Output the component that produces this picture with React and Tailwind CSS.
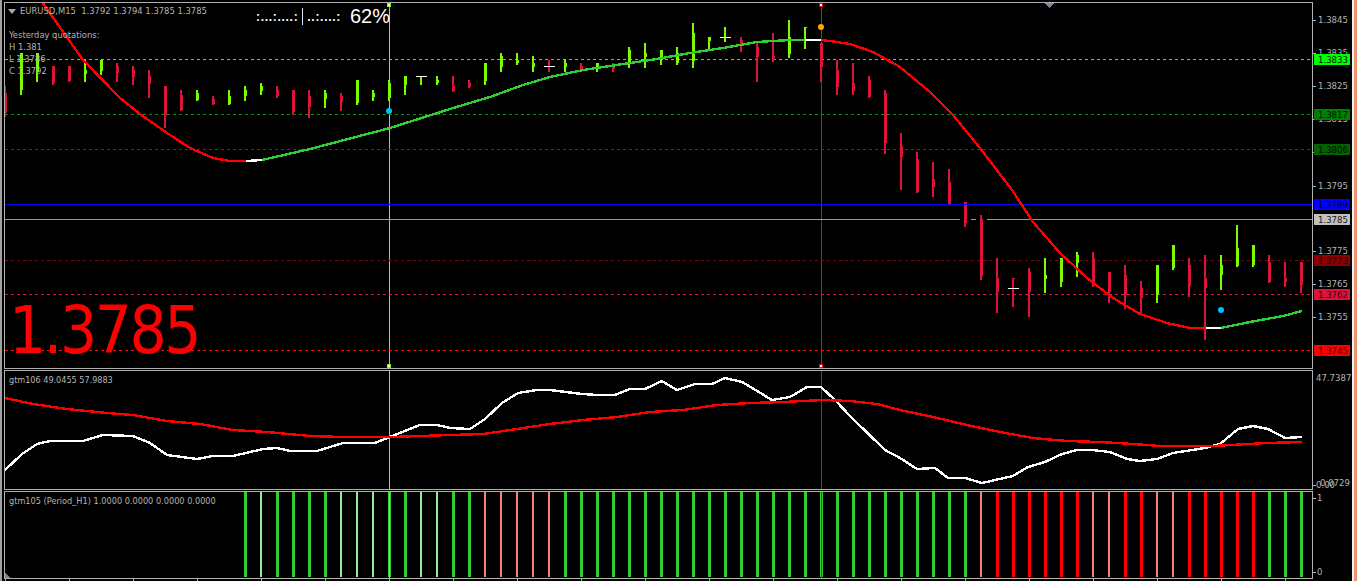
import React from 'react';

const RED = '#dc143c';
const LIME = '#7cfc00';

// [kind, high, low, tickTop, tickBottom, crossY]  x = 4 + 16 * index
const bars = [
  ['r', 86, 117, 93, 113], ['g', 53, 95, 53, 90], ['g', 53, 82, 53, 72], ['r', 66, 85, 66, 83],
  ['r', 66, 82, 66, 81], ['g', 60, 82, 70, 74], ['g', 60, 75, 60, 71], ['r', 63, 82, 66, 73],
  ['r', 66, 85, 70, 77], ['r', 70, 98, 76, 84], ['r', 86, 128, 86, 115], ['r', 90, 111, 95, 110],
  ['g', 90, 101, 93, 100], ['r', 96, 105, 99, 104], ['g', 90, 105, 96, 104], ['g', 86, 101, 90, 96],
  ['g', 83, 95, 86, 91], ['r', 86, 98, 90, 96], ['r', 90, 115, 90, 112], ['r', 90, 118, 96, 107],
  ['g', 90, 108, 93, 99], ['r', 93, 111, 96, 102], ['g', 80, 105, 80, 103], ['g', 90, 101, 93, 97],
  ['g', 80, 101, 83, 98], ['g', 76, 95, 76, 85], ['g', 76, 85, 76, 77, 76], ['g', 76, 85, 80, 83],
  ['r', 76, 92, 86, 91], ['r', 80, 88, 83, 87], ['g', 63, 85, 63, 81], ['g', 53, 72, 56, 67],
  ['g', 53, 65, 60, 63], ['g', 56, 72, 63, 67], ['r', 60, 72, 66, 67, 66], ['g', 60, 72, 63, 67],
  ['r', 63, 70, 66, 69], ['g', 63, 72, 63, 69], ['r', 63, 72, 66, 69], ['g', 47, 68, 50, 63],
  ['g', 43, 68, 53, 57], ['g', 50, 65, 50, 60], ['g', 47, 65, 53, 63], ['g', 23, 68, 33, 61],
  ['g', 37, 50, 37, 41], ['g', 27, 42, 37, 38, 37], ['r', 37, 52, 40, 43], ['r', 43, 82, 47, 57],
  ['r', 33, 62, 56, 60], ['g', 20, 58, 37, 54], ['g', 27, 49, 27, 28], ['r', 43, 82, 43, 67],
  ['r', 60, 95, 70, 87], ['r', 63, 95, 83, 91], ['r', 76, 98, 80, 97], ['r', 90, 154, 93, 143],
  ['r', 133, 190, 146, 157], ['r', 152, 193, 159, 192], ['r', 162, 197, 179, 187], ['r', 169, 204, 182, 204],
  ['r', 202, 227, 202, 223], ['r', 215, 280, 219, 276], ['r', 258, 313, 278, 292], ['r', 278, 307, 278, 279, 288],
  ['r', 268, 317, 272, 292], ['g', 258, 293, 275, 279], ['g', 258, 287, 258, 282], ['g', 252, 277, 255, 263],
  ['r', 252, 287, 258, 286], ['r', 272, 303, 272, 292], ['r', 265, 309, 275, 295], ['r', 281, 315, 288, 298],
  ['g', 265, 303, 265, 295], ['g', 245, 270, 245, 268], ['r', 258, 297, 265, 286], ['r', 255, 340, 278, 288],
  ['g', 255, 290, 265, 275], ['g', 225, 267, 248, 266], ['g', 245, 267, 245, 265], ['r', 255, 283, 262, 282],
  ['r', 262, 287, 278, 282], ['r', 262, 293, 262, 285],
];

const pts = (a) => a.map((p) => p.join(',')).join(' ');

const maRed1 = [[42, 2], [83, 60], [120, 98], [140, 114], [167, 133], [190, 148], [213, 158], [230, 161], [246, 161]];
const maGreen1 = [[262, 160], [310, 149], [390, 128], [450, 109], [490, 97], [523, 85], [550, 77], [583, 70], [630, 63], [657, 59], [690, 53], [723, 48], [757, 42], [790, 40], [805, 40]];
const maRed2 = [[821, 40], [830, 41], [850, 44], [873, 52], [900, 67], [930, 92], [953, 115], [980, 148], [1012, 190], [1033, 222], [1060, 253], [1087, 278], [1113, 298], [1140, 314], [1167, 323], [1190, 328], [1206, 328]];
const maGreen2 = [[1221, 328], [1250, 322], [1283, 316], [1302, 311]];

const oscWhite = [[5, 470], [22, 454], [37, 444], [50, 441], [83, 441], [103, 435], [133, 436], [150, 443], [167, 455], [197, 459], [213, 456], [233, 456], [263, 449], [277, 448], [290, 451], [317, 451], [343, 443], [375, 443], [390, 437], [420, 425], [437, 425], [450, 428], [470, 429], [485, 419], [502, 403], [518, 393], [537, 390], [550, 390], [582, 394], [597, 395], [615, 395], [630, 389], [645, 389], [662, 381], [677, 390], [695, 384], [712, 384], [725, 378], [742, 382], [772, 400], [790, 397], [807, 387], [821, 387], [835, 400], [852, 418], [885, 450], [900, 458], [917, 469], [935, 468], [948, 478], [965, 478], [982, 483], [1013, 476], [1028, 467], [1045, 462], [1062, 454], [1077, 450], [1092, 450], [1110, 452], [1127, 459], [1140, 461], [1157, 459], [1173, 453], [1205, 448], [1220, 444], [1238, 429], [1253, 426], [1268, 429], [1285, 438], [1302, 437]];
const oscRed = [[5, 398], [33, 404], [67, 409], [107, 413], [133, 415], [167, 421], [200, 424], [233, 430], [267, 432], [310, 436], [343, 437], [390, 437], [450, 435], [483, 434], [517, 429], [550, 424], [583, 420], [617, 417], [650, 412], [683, 410], [717, 405], [750, 403], [783, 402], [823, 400], [850, 401], [877, 404], [900, 410], [933, 417], [967, 425], [1000, 432], [1033, 438], [1067, 441], [1100, 442], [1133, 444], [1160, 446], [1213, 446], [1267, 443], [1302, 442]];

// g thick green, l light green, s salmon, r red; first bar sits at x = 244
const histo = 'gl'.concat('gggg', 'lll', 'gg', 'll', 'gg', 'sssss', 'g'.repeat(26), 's', 'rrrrrr', 'ss', 'rr', 'ss', 'rrrrr', 'ggg');
const histoStyle = {
  g: ['#32cd32', 3], l: ['#90ee90', 2], s: ['#fa8072', 2], r: ['#ff0000', 3],
};

const levels = [
  { y: 59, line: '#33ee33', tag: '#00ff00', text: '#002000', label: '1.3833' },
  { y: 114, line: '#009000', tag: '#008000', text: '#00100a', label: '1.3817' },
  { y: 149, line: '#006400', tag: '#006400', text: '#000a05', label: '1.3806' },
  { y: 260, line: '#8b0000', tag: '#8b0000', text: '#2a0000', label: '1.3773' },
  { y: 294, line: RED, tag: RED, text: '#30000c', label: '1.3762' },
  { y: 350, line: '#ff0000', tag: '#ff0000', text: '#400000', label: '1.3745' },
];

const priceScale = [
  [20, '1.3845'], [53, '1.3835'], [86, '1.3825'], [119, '1.3815'], [152, '1.3805'],
  [186, '1.3795'], [251, '1.3775'], [284, '1.3765'], [317, '1.3755'],
];

function Marker({ x, y, color }) {
  return <rect x={x + 0.5} y={y + 0.5} width="3" height="3" fill="#fff" stroke={color} strokeWidth="1" />;
}

function MainChart() {
  return (
    <svg viewBox="5 3 1307 365" className="block w-[1307px] h-[365px]" shapeRendering="crispEdges">
      <line x1="389.5" x2="389.5" y1="3" y2="368" stroke={LIME} />
      <line x1="821.5" x2="821.5" y1="3" y2="368" stroke="#ff0000" />
      {levels.map((l) => (
        <line key={l.y} x1="5" x2="1312" y1={l.y + 0.5} y2={l.y + 0.5} stroke={l.line} strokeDasharray="3 3" />
      ))}
      <line x1="5" x2="960" y1="219.5" y2="219.5" stroke="#9a9a9a" />
      <line x1="971" x2="976" y1="219.5" y2="219.5" stroke="#9a9a9a" />
      <line x1="987" x2="1312" y1="219.5" y2="219.5" stroke="#9a9a9a" />
      {bars.map(([kind, hi, lo, top, bottom, cross], i) => {
        const x = 4 + 16 * i;
        const fill = kind === 'g' ? LIME : RED;
        return (
          <g key={i}>
            <rect x={x} y={hi} width="2" height={lo - hi} fill={fill} />
            <rect x={x + 2} y={top} width="1" height={bottom - top} fill={fill} />
            {cross !== undefined && <rect x={x - 4} y={cross} width="11" height="1" fill="#fff" />}
          </g>
        );
      })}
      <line x1="5" x2="1312" y1="204.5" y2="204.5" stroke="#0000ff" strokeWidth="1" />
      <polyline points={pts(maRed1)} fill="none" stroke="#ff0000" strokeWidth="2.4" />
      <polyline points="246,161 262,160" fill="none" stroke="#fff" strokeWidth="2.4" />
      <polyline points={pts(maGreen1)} fill="none" stroke="#32cd32" strokeWidth="2.4" />
      <polyline points="805,40 821,40" fill="none" stroke="#fff" strokeWidth="2.4" />
      <polyline points={pts(maRed2)} fill="none" stroke="#ff0000" strokeWidth="2.4" />
      <polyline points="1206,328 1221,328" fill="none" stroke="#fff" strokeWidth="2.4" />
      <polyline points={pts(maGreen2)} fill="none" stroke="#32cd32" strokeWidth="2.4" />
      <g shapeRendering="auto">
        <circle cx="389" cy="111" r="3" fill="#00bfff" />
        <circle cx="1221" cy="310" r="3" fill="#00bfff" />
        <circle cx="821" cy="27" r="3" fill="#ffa500" />
      </g>
      <polygon points="1045,3 1054,3 1049.5,8" fill="#778899" />
      <Marker x={387} y={3} color={LIME} />
      <Marker x={819} y={3} color="#ff0000" />
      <Marker x={387} y={364} color={LIME} />
      <Marker x={819} y={364} color="#ff0000" />
    </svg>
  );
}

function OscChart() {
  return (
    <svg viewBox="5 371 1307 118" className="block w-[1307px] h-[118px]" shapeRendering="crispEdges">
      <line x1="389.5" x2="389.5" y1="371" y2="489" stroke={LIME} />
      <line x1="821.5" x2="821.5" y1="371" y2="489" stroke="#ff0000" />
      <polyline points={pts(oscWhite)} fill="none" stroke="#fff" strokeWidth="2.4" />
      <polyline points={pts(oscRed)} fill="none" stroke="#ff0000" strokeWidth="2.4" />
    </svg>
  );
}

function HistoChart() {
  return (
    <svg viewBox="5 492 1307 86" className="block w-[1307px] h-[86px]" shapeRendering="crispEdges">
      {histo.split('').map((k, i) => {
        const [fill, w] = histoStyle[k];
        return <rect key={i} x={244 + 16 * i} y="492" width={w} height="85" fill={fill} />;
      })}
      <line x1="389.5" x2="389.5" y1="492" y2="578" stroke={LIME} />
      <line x1="821.5" x2="821.5" y1="492" y2="578" stroke="#ff0000" />
      <polygon points="5,573 5,578 10,578" fill="#778899" />
    </svg>
  );
}

function AxisLabel({ y, x = 3, tick = true, children }) {
  return (
    <div className="absolute left-0 h-3 flex items-center" style={{ top: y - 6 }}>
      {tick && <span className="w-[3px] h-px bg-[#b0b0b0]" />}
      <span className="absolute leading-3 text-[#b4b4b4] whitespace-nowrap" style={{ left: x }}>{children}</span>
    </div>
  );
}

export default function App() {
  return (
    <div
      className="w-[1357px] h-[581px] flex bg-black overflow-hidden text-[9.5px] text-[#b4b4b4]"
      style={{ fontFamily: '"DejaVu Sans Condensed", "DejaVu Sans", sans-serif', fontStretch: 'condensed' }}
    >
      <div className="w-[2px] bg-[#a0a0a0]" />
      <div className="w-[2px]" />

      <div className="w-[1348px] flex flex-col pt-[2px]">
        {/* price pane */}
        <div className="flex h-[367px]">
          <div className="relative w-[1309px] border border-[#b0b0b0]">
            <MainChart />
            <div className="absolute left-[3px] top-[6px] w-[8px] h-[5px] flex justify-center">
              <span className="w-0 h-0 border-x-[4px] border-x-transparent border-t-[5px] border-t-[#a8a8a8]" />
            </div>
            <div className="absolute left-[15px] top-[2px] text-[9.35px] leading-3 whitespace-pre">
              EURUSD,M15  1.3792 1.3794 1.3785 1.3785
            </div>
            <div className="absolute left-[4px] top-[26px] flex flex-col text-[9.3px] leading-3">
              <span>Yesterday quotations:</span>
              <span>H 1.381</span>
              <span>L 1.3786</span>
              <span>C 1.3792</span>
            </div>
            <div className="absolute left-[251px] top-[4px] flex items-end h-[18px] text-white font-['Liberation_Sans',sans-serif] text-[12px] leading-none font-bold">
              <span className="tracking-[0.7px] pb-[2px]">:...:....:</span>
              <span className="w-[1px] h-[17px] mx-[4px] bg-[#cfe8ff]" />
              <span className="tracking-[0.7px] pb-[2px]">..:....:</span>
            </div>
            <div className="absolute left-[345px] top-[1px] text-white font-['Liberation_Sans',sans-serif] text-[20px] leading-[24px]">
              62%
            </div>
            <div className="absolute left-[4px] top-[290px] text-[#ff0000] text-[65px] leading-[76px] tracking-[-2.4px]">
              1.3785
            </div>
          </div>
          <div className="relative flex-1">
            {priceScale.map(([y, label]) => (
              <AxisLabel key={label} y={y - 2} x={5}>{label}</AxisLabel>
            ))}
            {levels.map((l) => (
              <div
                key={l.label}
                className="absolute left-[1px] w-[36px] h-[11px] pl-[4px] leading-[11px]"
                style={{ top: l.y - 7, backgroundColor: l.tag, color: l.text }}
              >
                {l.label}
              </div>
            ))}
            <div className="absolute left-[1px] top-[197px] w-[36px] h-[11px] pl-[4px] leading-[11px] bg-[#0000ff] text-[#000030]">1.3789</div>
            <div className="absolute left-[1px] top-[212px] w-[36px] h-[11px] pl-[4px] leading-[11px] bg-[#c0c0c0] text-[#181818]">1.3785</div>
          </div>
        </div>

        <div className="h-px" />

        {/* oscillator pane */}
        <div className="flex h-[120px]">
          <div className="relative w-[1309px] border border-[#b0b0b0]">
            <OscChart />
            <div className="absolute left-[4px] top-[3px] text-[9px] leading-3">gtm106 49.0455 57.9883</div>
          </div>
          <div className="relative flex-1">
            <AxisLabel y={8} x={3} tick={false}>47.7387</AxisLabel>
            <AxisLabel y={113} x={7} tick={false}>0.0729</AxisLabel>
            <AxisLabel y={115} x={3}>0.00</AxisLabel>
          </div>
        </div>

        <div className="h-px" />

        {/* signal pane */}
        <div className="flex h-[88px]">
          <div className="relative w-[1309px] border border-[#b0b0b0]">
            <HistoChart />
            <div className="absolute left-[4px] top-[3px] text-[9.1px] leading-3 whitespace-nowrap">
              gtm105 (Period_H1) 1.0000 0.0000 0.0000 0.0000
            </div>
          </div>
          <div className="relative flex-1">
            <AxisLabel y={7} x={4}>1</AxisLabel>
            <AxisLabel y={81} x={4}>0</AxisLabel>
          </div>
        </div>

        {/* time ticks */}
        <div className="flex h-[2px] pl-px w-[1309px] overflow-hidden">
          {Array.from({ length: 21 }).map((_, i) => (
            <span key={i} className="shrink-0 w-[64px] border-l border-[#b0b0b0]" />
          ))}
        </div>
      </div>

      <div className="w-[2px] bg-[#f0f0f0]" />
      <div className="flex-1 bg-[#ea9370]" />
    </div>
  );
}
